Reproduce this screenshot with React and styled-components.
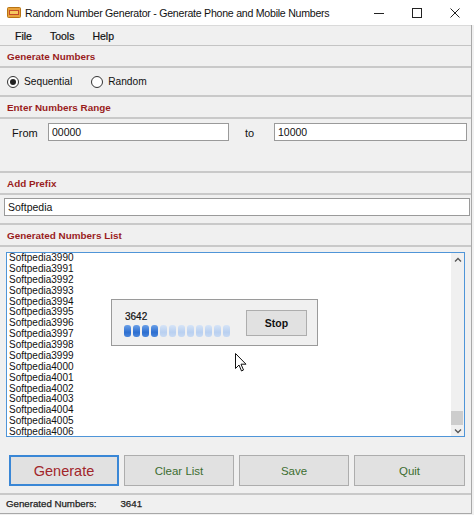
import React from "react";
import styled, { createGlobalStyle } from "styled-components";

const Global = createGlobalStyle`
  html, body { margin: 0; padding: 0; background: #f0f0f0; }
  body { width: 474px; height: 515px; overflow: hidden; font-family: "Liberation Sans", Arial, sans-serif; }
  * { box-sizing: border-box; }
`;

const Window = styled.div`
  position: relative;
  width: 474px;
  height: 515px;
  display: flex;
  flex-direction: column;
  background: #f0f0f0;
`;

const TitleBar = styled.div`
  height: 25px;
  background: #fff;
  display: flex;
  align-items: center;
  padding-left: 7px;
`;

const TitleText = styled.div`
  margin-left: 4px;
  font-family: "Liberation Sans", Arial, sans-serif;
  font-size: 10.6px;
  letter-spacing: -0.25px;
  color: #111;
  flex: 1;
  white-space: nowrap;
`;

const Controls = styled.div`
  display: flex;
  align-items: center;
  height: 100%;
`;

const CtrlBtn = styled.div`
  width: 38px;
  height: 100%;
  display: flex;
  align-items: center;
  justify-content: center;
`;

const Client = styled.div`
  flex: 1;
  display: flex;
  flex-direction: column;
  margin-right: 2px;
  border-right: 1px solid #a8a8a8;
  border-bottom: 1px solid #a8a8a8;
  margin-bottom: 1px;
`;

const MenuBar = styled.div`
  height: 21px;
  border-top: 1px solid #dadada;
  border-bottom: 1px solid #c4c4c4;
  display: flex;
  align-items: center;
  padding-left: 15px;
  gap: 18px;
  font-size: 10.5px;
  color: #111;
`;

const MenuItem = styled.span`
  color: #111;
  -webkit-text-stroke: 0.2px #111;
`;

const SectionHeader = styled.div`
  height: 22px;
  border-bottom: 2px solid #c9c9c9;
  display: flex;
  align-items: center;
  padding-left: 7px;
  font-size: 9.9px;
  font-weight: bold;
  color: #9a1c1c;
`;

const Section = styled.div`
  height: ${(p) => p.$h}px;
  border-bottom: 2px solid #c9c9c9;
  display: flex;
  align-items: ${(p) => p.$align || "center"};
  padding: ${(p) => p.$pad || "0"};
`;

const RadioLabel = styled.label`
  display: flex;
  align-items: center;
  gap: 5px;
  font-size: 10.2px;
  color: #111;
  margin-right: ${(p) => p.$mr || 0}px;
`;

const RadioCircle = styled.span`
  width: 12px;
  height: 12px;
  border-radius: 50%;
  border: 1px solid #333;
  background: #fff;
  display: flex;
  align-items: center;
  justify-content: center;
  &::after {
    content: "";
    width: 6px;
    height: 6px;
    border-radius: 50%;
    background: ${(p) => (p.$on ? "#222" : "transparent")};
  }
`;

const FieldLabel = styled.span`
  font-size: 11px;
  line-height: 20px;
  color: #111;
  width: ${(p) => p.$w}px;
  padding-left: ${(p) => p.$pl || 0}px;
`;

const TextBox = styled.div`
  height: 18px;
  width: ${(p) => p.$w}px;
  background: #fff;
  border: 1px solid #9a9a9a;
  font-size: 10.5px;
  color: #111;
  display: flex;
  align-items: center;
  padding-left: 3px;
`;

const ListArea = styled.div`
  flex: 1;
  display: flex;
  flex-direction: column;
  padding: 5px 4px 0 6px;
`;

const ListBox = styled.div`
  height: 185px;
  width: 459px;
  background: #fff;
  border: 1px solid #4f95d8;
  display: flex;
`;

const ListItems = styled.div`
  flex: 1;
  padding: 0 0 0 2px;
  font-size: 10px;
  line-height: 10.88px;
  color: #111;
`;

const ScrollBar = styled.div`
  width: 13px;
  background: #f0f0f0;
  display: flex;
  flex-direction: column;
  align-items: center;
  justify-content: space-between;
  padding: 4px 0 2px;
`;

const ScrollTrack = styled.div`
  flex: 1;
  width: 100%;
  display: flex;
  flex-direction: column;
  justify-content: flex-end;
  padding-bottom: 4px;
`;

const Thumb = styled.div`
  height: 14px;
  width: 12px;
  background: #cdcdcd;
`;

const ButtonRow = styled.div`
  display: flex;
  gap: 5px;
  margin-top: 18px;
  padding-left: 3px;
`;

const Button = styled.div`
  width: ${(p) => p.$w || 110}px;
  height: 31px;
  background: #e1e1e1;
  border: ${(p) => (p.$focus ? "2px solid #3a87d6" : "1px solid #adadad")};
  display: flex;
  align-items: center;
  justify-content: center;
  font-size: ${(p) => (p.$big ? "14.5px" : "11.5px")};
  color: ${(p) => (p.$big ? "#a1262b" : "#3d6e30")};
`;

const StatusBar = styled.div`
  margin-top: 7px;
  margin-left: -6px;
  margin-right: -4px;
  border-top: 2px solid #c9c9c9;
  height: 19px;
  display: flex;
  align-items: center;
  padding-left: 6px;
  font-size: 9.7px;
  color: #222;
  -webkit-text-stroke: 0.25px #222;
`;

const StatusValue = styled.span`
  margin-left: 24px;
`;

const Overlay = styled.div`
  position: absolute;
  left: 111px;
  top: 299px;
  width: 207px;
  height: 47px;
  background: #f0f0f0;
  border: 1px solid #9a9a9a;
  display: flex;
  align-items: center;
  padding: 0 10px 0 12px;
  justify-content: space-between;
`;

const ProgressCol = styled.div`
  display: flex;
  flex-direction: column;
  gap: 3px;
  margin-top: 2px;
`;

const Count = styled.span`
  font-size: 10px;
  color: #111;
  padding-left: 1px;
  -webkit-text-stroke: 0.2px #111;
`;

const Blocks = styled.div`
  display: flex;
  gap: 2px;
`;

const Block = styled.span`
  width: 7px;
  height: 12px;
  border-radius: 3px;
  background: ${(p) =>
    p.$on
      ? "linear-gradient(#6aa0e8, #2e6fd0 60%, #4a86dc)"
      : "linear-gradient(#d6e4f7, #b9d0f0 60%, #c8daf3)"};
`;

const StopButton = styled.div`
  width: 61px;
  height: 26px;
  background: #e1e1e1;
  border: 1px solid #adadad;
  display: flex;
  align-items: center;
  justify-content: center;
  font-size: 10.5px;
  font-weight: bold;
  color: #111;
`;

const Cursor = styled.svg`
  position: absolute;
  left: 235px;
  top: 353px;
`;

const items = [];
for (let i = 3990; i <= 4006; i++) items.push("Softpedia" + i);

export default function App() {
  return (
    <>
      <Global />
      <Window>
        <TitleBar>
          <svg width="14" height="11" viewBox="0 0 14 11">
            <rect x="0.5" y="0.5" width="13" height="10" rx="1" fill="#e8a23a" stroke="#b87414" />
            <rect x="2" y="3" width="10" height="5" fill="#c44a2a" />
            <rect x="3" y="4" width="8" height="3" fill="#f6c860" />
          </svg>
          <TitleText>Random Number Generator - Generate Phone and Mobile Numbers</TitleText>
          <Controls>
            <CtrlBtn>
              <svg width="10" height="10" viewBox="0 0 10 10">
                <line x1="0" y1="5.5" x2="10" y2="5.5" stroke="#222" strokeWidth="1" />
              </svg>
            </CtrlBtn>
            <CtrlBtn>
              <svg width="10" height="10" viewBox="0 0 10 10">
                <rect x="0.5" y="0.5" width="9" height="9" fill="none" stroke="#222" strokeWidth="1" />
              </svg>
            </CtrlBtn>
            <CtrlBtn>
              <svg width="10" height="10" viewBox="0 0 10 10">
                <path d="M0.5 0.5 L9.5 9.5 M9.5 0.5 L0.5 9.5" stroke="#222" strokeWidth="1" />
              </svg>
            </CtrlBtn>
          </Controls>
        </TitleBar>
        <Client>
          <MenuBar>
            <MenuItem>File</MenuItem>
            <MenuItem>Tools</MenuItem>
            <MenuItem>Help</MenuItem>
          </MenuBar>
          <SectionHeader>Generate Numbers</SectionHeader>
          <Section $h={29} $pad="0 0 0 7px">
            <RadioLabel $mr={19}>
              <RadioCircle $on />
              Sequential
            </RadioLabel>
            <RadioLabel>
              <RadioCircle />
              Random
            </RadioLabel>
          </Section>
          <SectionHeader>Enter Numbers Range</SectionHeader>
          <Section $h={54} $align="flex-start" $pad="4px 0 0 12px">
            <FieldLabel $w={36}>From</FieldLabel>
            <TextBox $w={181}>00000</TextBox>
            <FieldLabel $w={45} $pl={16}>to</FieldLabel>
            <TextBox $w={193}>10000</TextBox>
          </Section>
          <SectionHeader>Add Prefix</SectionHeader>
          <Section $h={30} $align="flex-start" $pad="3px 0 0 4px">
            <TextBox $w={466}>Softpedia</TextBox>
          </Section>
          <SectionHeader>Generated Numbers List</SectionHeader>
          <ListArea>
            <ListBox>
              <ListItems>
                {items.map((t) => (
                  <div key={t}>{t}</div>
                ))}
              </ListItems>
              <ScrollBar>
                <svg width="8" height="5" viewBox="0 0 8 5">
                  <path d="M1 4.5 L4 1.5 L7 4.5" fill="none" stroke="#555" strokeWidth="1.3" />
                </svg>
                <ScrollTrack>
                  <Thumb />
                </ScrollTrack>
                <svg width="8" height="5" viewBox="0 0 8 5">
                  <path d="M1 0.5 L4 3.5 L7 0.5" fill="none" stroke="#555" strokeWidth="1.3" />
                </svg>
              </ScrollBar>
            </ListBox>
            <ButtonRow>
              <Button $focus $big>Generate</Button>
              <Button>Clear List</Button>
              <Button>Save</Button>
              <Button $w={111}>Quit</Button>
            </ButtonRow>
            <StatusBar>
              Generated Numbers:
              <StatusValue>3641</StatusValue>
            </StatusBar>
          </ListArea>
        </Client>
        <Overlay>
          <ProgressCol>
            <Count>3642</Count>
            <Blocks>
              {Array.from({ length: 12 }).map((_, i) => (
                <Block key={i} $on={i < 4} />
              ))}
            </Blocks>
          </ProgressCol>
          <StopButton>Stop</StopButton>
        </Overlay>
        <Cursor width="12" height="19" viewBox="0 0 12 19">
          <path d="M0.5 0.5 L0.5 15.5 L4 12 L6.5 18 L8.5 17 L6 11.2 L11 11.2 Z" fill="#fff" stroke="#111" strokeWidth="1" />
        </Cursor>
      </Window>
    </>
  );
}
